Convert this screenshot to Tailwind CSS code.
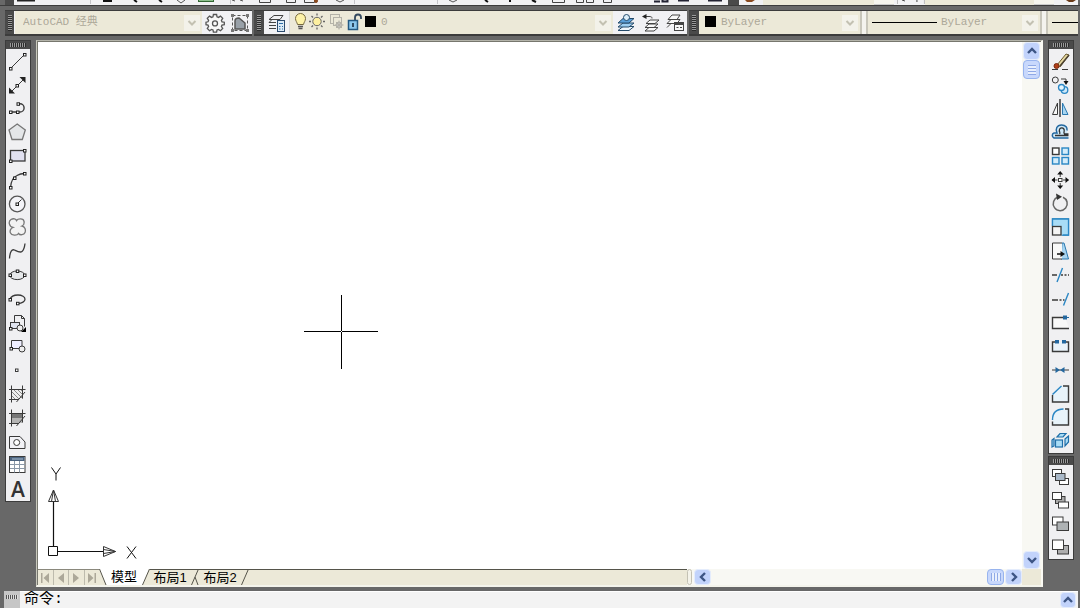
<!DOCTYPE html>
<html lang="zh-CN">
<head>
  <meta charset="UTF-8" />
  <meta name="viewport" content="width=device-width, initial-scale=1" />
  <title>AutoCAD</title>
  <script src="https://cdn.jsdelivr.net/npm/@tailwindcss/browser@4"></script>
</head>
<body class="flex h-screen flex-col overflow-hidden bg-[#686868] font-['Liberation_Sans','Noto_Sans_CJK_SC',sans-serif] text-black">

  <div class="flex h-1.5 shrink-0 border-b border-[#3c3c3c] bg-[#686868] pl-[5px] pr-0.5">
    <div class="w-[9px] bg-[#4a4a4a]"></div>
    <div class="h-[5px] w-[714px] overflow-hidden bg-[#f1f1f3]">
      <svg class="h-[5px] w-[714px]" viewBox="0 0 714 5" fill="none" stroke="#444">
        <path d="M3 .5h18" stroke="#222" stroke-width="2" />
        <path d="M76.500 0v4M340.500 0v4M423.500 0v4M216.500 0v4" stroke="#c4c4c8" />
        <path d="M89 1h9M120 0l3 2M145 0l3 2M471 0l3 2M496 0v2M518 0l4 2" stroke="#111" stroke-width="2" />
        <path d="M163 0l4 3 4-3M218 0l3 1M226 0l3 1M322 0l4 2 4-2M435 0l4 2 4-2" stroke="#555" />
        <rect x="184.500" y="-3.500" width="15" height="5" fill="#8cbf8c" stroke="#363" />
        <path d="M245.500 0v2.500h11V0M272.500 0v2.500h9V0M290.500 0v2.500h10V0M538.500 0v2.500h12V0M562.500 0v2.500h7V0M572.500 0v2.500h7V0M589.500 0v2.500h8V0" />
        <circle cx="302" cy="1" r="1.500" fill="#8a4a20" stroke="#8a4a20" />
        <path d="M640 1.500h6M648.500 0v1.500h5V0M664 .5h11M694 .5h14" stroke="#223" stroke-width="2" />
      </svg>
    </div>
    <div class="w-[11px] bg-[#4a4a4a]"></div>
    <div class="flex h-[5px] min-w-0 flex-1 bg-[#f1f1f3]">
      <svg class="h-[5px] w-6" viewBox="0 0 24 5"><path d="M6 0h10l-3 2H8z" fill="#8a4a20" /></svg>
      <div class="w-[111px] bg-[#ece9d8]"></div>
      <div class="w-5 border-b border-[#ccc] bg-[#f6f5ee]"></div>
      <svg class="h-[5px] w-8" viewBox="0 0 32 5" fill="none" stroke="#444"><path d="M3.500 0v4M30.500 0v4" stroke="#bbb" /><path d="M8 0l3 1M23 0v2" /></svg>
      <div class="w-[109px] bg-[#ece9d8]"></div>
      <div class="w-5 border-b border-[#ccc] bg-[#f6f5ee]"></div>
      <svg class="h-[5px] w-6" viewBox="0 0 24 5"><path d="M12 0h10l-3 2h-4z" fill="#6a3a18" /></svg>
    </div>
  </div>

  <!-- Workspace / layers / properties toolbars -->
  <header class="flex h-[34px] shrink-0 items-start gap-0.5 pl-[5px] pr-0.5 pt-1">
    <div class="flex h-[26px] border-b-2 border-t border-[#3c3c3c] bg-[#4a4a4a]">
      <div class="flex w-[9px] items-center justify-center"><span class="h-4 w-1 bg-[repeating-linear-gradient(#9a9a9a_0_1px,#2c2c2c_1px_2px)]"></span></div>
      <div class="flex bg-[#f1f1f4]">
        <div class="relative ml-px flex w-[187px]">
          <select aria-label="工作空间" class="w-full appearance-none bg-[#ece9d8] pl-2 font-['Liberation_Mono','Noto_Sans_CJK_SC',monospace] text-[11px] text-[#aca899] outline-none">
            <option>AutoCAD 经典</option>
          </select>
          <svg class="pointer-events-none absolute right-0.5 top-1 size-4 bg-[#f3f2ea]" viewBox="0 0 16 16" fill="none" stroke="#c3c1b2" stroke-width="2"><path d="M4.500 6l3.500 3.500L11.500 6" /></svg>
        </div>
        <button aria-label="工作空间设置" class="flex w-[25px] items-center justify-center">
          <svg class="size-5" viewBox="0 0 20 20" fill="#f8f8f8" stroke="#555" stroke-width="1.300">
            <path d="M8.400 1.500h3.200l.4 2.300 1.500.6 2-1.300 2.200 2.200-1.300 2 .6 1.500 2.300.4v2.400l-2.300.4-.6 1.500 1.300 2-2.200 2.200-2-1.300-1.500.6-.4 2.200H8.400L8 17l-1.500-.6-2 1.300-2.200-2.200 1.300-2L3 12l-2-.4V9.200L3 8.800l.6-1.500-1.300-2 2.200-2.200 2 1.300L8 3.800z" />
            <circle cx="10" cy="10.400" r="2.500" />
          </svg>
        </button>
        <button aria-label="我的工作空间" class="flex w-[25px] items-center justify-center">
          <svg class="size-5" viewBox="0 0 20 20" fill="none" stroke="#555">
            <rect x="2.500" y="2.500" width="15" height="15" stroke-dasharray="3 2" />
            <path d="M5 16V8c0-2 2-3 4-3l6 5v6z" fill="#98a0a8" stroke-width="1.500" />
            <path d="M1 1h3v3H1zM16 1h3v3h-3zM1 16h3v3H1zM16 16h3v3h-3z" fill="#777" stroke="none" />
          </svg>
        </button>
      </div>
    </div>

    <div class="flex h-[26px] border-b-2 border-t border-[#3c3c3c] bg-[#4a4a4a]">
      <div class="flex w-[10px] items-center justify-center"><span class="h-4 w-1 bg-[repeating-linear-gradient(#9a9a9a_0_1px,#2c2c2c_1px_2px)]"></span></div>
      <div class="flex bg-[#f1f1f4]">
        <button aria-label="图层特性管理器" class="flex w-[25px] items-center justify-center">
          <svg class="size-5" viewBox="0 0 20 20" fill="none" stroke="#444">
            <path d="M2 6.500L7 2.500h9l-3 4zM5 9.500H2l3-3M9 9.500H4M2 12.500h7M2 15.500h7" />
            <rect x="10.500" y="7.500" width="7" height="11" fill="#dceaf6" stroke="#2b4a6e" />
            <path d="M12 10.500h4M12 13.500h1.500M15 13.500h1M12 16h1.500M15 16h1" stroke="#2b6ca8" />
          </svg>
        </button>
        <div class="relative flex w-[324px] border-l border-[#d8d8d8]">
          <select aria-label="图层" class="w-full appearance-none bg-[#ece9d8] pl-[91px] font-['Liberation_Mono','Noto_Sans_CJK_SC',monospace] text-[11px] text-[#aca899] outline-none">
            <option>0</option>
          </select>
          <svg class="pointer-events-none absolute left-0.5 top-0 h-[22px] w-[90px]" viewBox="0 0 90 22" fill="none" stroke="#555">
            <path d="M5.500 13.500C5 11 3.500 10 3.500 7.500a5 5 0 0 1 10 0C13.500 10 12 11 11.500 13.500z" fill="#fdf3a8" stroke="#776a40" />
            <path d="M6 15.500h5M6.500 17.500h4" stroke-width="1.500" />
            <circle cx="25" cy="10.500" r="4.200" fill="#fdf0a0" stroke="#666" />
            <path d="M25 2.500v2M25 16.500v2M17 10.500h2M31 10.500h2M19.500 5l1.500 1.500M29 14.500l1.500 1.500M30.500 5L29 6.500M21 14.500L19.500 16" stroke="#666" stroke-width="1.300" />
            <g stroke="#b4b2a8"><rect x="38.500" y="3.500" width="9" height="9" /><rect x="41.500" y="6.500" width="8" height="8" fill="#ece9d8" /><circle cx="47" cy="14" r="3" fill="#ccc" /><path d="M47 9.500v9M42.500 14h9M44 11l6 6M50 11l-6 6" /></g>
            <rect x="56.500" y="9.500" width="9" height="9" fill="#8cc8ec" stroke="#245a82" stroke-width="1.500" />
            <path d="M61 12v4" stroke="#123" stroke-width="1.500" />
            <path d="M63 9V6.500a3 3 0 0 1 6 0V8" stroke="#34495e" stroke-width="1.800" />
            <path d="M73 5h11v11H73z" fill="#000" stroke="none" />
          </svg>
          <svg class="pointer-events-none absolute right-0.5 top-1 size-4 bg-[#f3f2ea]" viewBox="0 0 16 16" fill="none" stroke="#c3c1b2" stroke-width="2"><path d="M4.500 6l3.500 3.500L11.500 6" /></svg>
        </div>
        <button aria-label="将对象的图层置为当前" class="flex w-[25px] items-center justify-center">
          <svg class="size-5" viewBox="0 0 20 20" fill="#eef6fc" stroke="#244a6a">
            <path d="M2 17.500l5-4h11l-5 4z" /><path d="M2 14l5-4h11l-5 4z" fill="#9ccdf0" /><path d="M2 10l5-4.500h11L13 10z" fill="#5a9fd8" />
            <circle cx="10.500" cy="4.500" r="3" fill="#dceefa" />
          </svg>
        </button>
        <button aria-label="上一个图层" class="flex w-[25px] items-center justify-center">
          <svg class="size-5" viewBox="0 0 20 20" fill="#f8f8f8" stroke="#444">
            <path d="M4 18l4-3.500h9L13 18zM4 14.500L8 11h9l-4 3.500zM5 10.500L9 7h9l-4 3.500z" />
            <path d="M4 3.500h4c3 0 3 1 3 2" fill="none" /><path d="M5.500 1L1 3.500 5.500 6z" fill="#222" stroke="none" />
          </svg>
        </button>
        <button aria-label="图层状态管理器" class="flex w-[24px] items-center justify-center">
          <svg class="size-5" viewBox="0 0 20 20" fill="#f8f8f8" stroke="#444">
            <path d="M2 14.500l4-4h9M2 10.500l4-4h9l-3 4zM3 6.500L7 2h8l-3 4.500z" />
            <rect x="9.500" y="9.500" width="9" height="8" /><path d="M10 11h8" stroke-width="2" /><path d="M11.500 14.500h2M15 14.500h2" />
          </svg>
        </button>
      </div>
    </div>

    <div class="flex h-[26px] min-w-0 flex-1 border-b-2 border-t border-[#3c3c3c] bg-[#4a4a4a]">
      <div class="flex w-[10px] shrink-0 items-center justify-center"><span class="h-4 w-1 bg-[repeating-linear-gradient(#9a9a9a_0_1px,#2c2c2c_1px_2px)]"></span></div>
      <div class="flex min-w-0 flex-1 overflow-hidden bg-[#ece9d8] pl-0.5">
        <div class="relative flex w-[159px] shrink-0">
          <select aria-label="颜色" class="w-full appearance-none bg-[#ece9d8] pl-5 font-['Liberation_Mono','Noto_Sans_CJK_SC',monospace] text-[11px] text-[#aca899] outline-none">
            <option>ByLayer</option>
          </select>
          <span class="pointer-events-none absolute left-1 top-[5px] size-[11px] bg-black"></span>
          <svg class="pointer-events-none absolute right-0.5 top-1 size-4 bg-[#f3f2ea]" viewBox="0 0 16 16" fill="none" stroke="#c3c1b2" stroke-width="2"><path d="M4.500 6l3.500 3.500L11.500 6" /></svg>
        </div>
        <div class="w-2 shrink-0 border-x-2 border-[#c8c6ba] bg-[#f4f3ee]"></div>
        <div class="relative flex w-[172px] shrink-0">
          <select aria-label="线型" class="w-full appearance-none bg-[#ece9d8] pl-[73px] font-['Liberation_Mono','Noto_Sans_CJK_SC',monospace] text-[11px] text-[#aca899] outline-none">
            <option>ByLayer</option>
          </select>
          <span class="pointer-events-none absolute left-1 top-[11px] h-px w-[65px] bg-black"></span>
          <svg class="pointer-events-none absolute right-0.5 top-1 size-4 bg-[#f3f2ea]" viewBox="0 0 16 16" fill="none" stroke="#c3c1b2" stroke-width="2"><path d="M4.500 6l3.500 3.500L11.500 6" /></svg>
        </div>
        <div class="w-2 shrink-0 border-x-2 border-[#c8c6ba] bg-[#f4f3ee]"></div>
        <div class="relative flex min-w-0 flex-1">
          <select aria-label="线宽" class="w-full appearance-none bg-[#ece9d8] outline-none"></select>
          <span class="pointer-events-none absolute left-1 right-0 top-[11px] h-px bg-black"></span>
        </div>
      </div>
    </div>
  </header>

  <main class="flex min-h-0 flex-1 items-start gap-[5px] pl-[5px] pr-1.5">
    <!-- Draw toolbar -->
    <aside class="flex h-[462px] w-[26px] shrink-0 flex-col border border-[#3c3c3c] bg-[#f0f0f2]">
      <div class="flex h-2 shrink-0 items-center justify-center bg-[#4a4a4a]"><span class="h-1 w-4 bg-[repeating-linear-gradient(90deg,#9a9a9a_0_1px,#2c2c2c_1px_2px)]"></span></div>
      <div id="draw-tools" class="flex min-h-0 flex-1 flex-col"></div>
    </aside>

    <!-- Drawing window -->
    <section class="flex h-full min-w-0 flex-1 flex-col border-b-2 border-l border-r-2 border-t border-b-[#f4f4ec] border-l-[#c9c9bd] border-r-[#fbfbf4] border-t-[#b4b4aa]">
      <div class="flex min-h-0 flex-1 border-l border-t border-[#77776e]">
        <div class="relative min-w-0 flex-1 bg-white">
          <svg class="absolute left-[266px] top-[253px] h-[75px] w-[75px]" viewBox="0 0 75 75" stroke="#000" shape-rendering="crispEdges">
            <path d="M0 36.500h74M37.500 0v74" />
            <path d="M37 36.500h1" stroke="#fff" />
          </svg>
          <div class="absolute bottom-0 left-0 h-[110px] w-[110px]">
            <svg class="h-[110px] w-[110px]" viewBox="0 0 110 110" fill="none" stroke="#111">
              <path d="M10.500 87.500h9v9h-9z" />
              <path d="M15.500 87V43M20 92.500h46" stroke-width="1.200" />
              <path d="M15.500 31L10.500 42.500h10zM15.500 31l-2 11.500M15.500 31l2 11.500M77.500 92.500L65.500 87.500v10zM77.500 92.500l-12-2M77.500 92.500l-12 2" stroke="#333" />
              <path d="M13.500 8.500L18 15v6.500M22.500 8.500L18 15M89 87.500l9 12M98 87.500l-9 12" />
            </svg>
          </div>
        </div>
        <div class="flex w-[19px] flex-col items-center bg-[#f8f8f3]">
          <button aria-label="向上滚动" class="flex h-[18px] w-[17px] items-center justify-center rounded-sm border border-[#e4ecfc] bg-[#c2d3fb]"><svg class="h-2 w-[10px]" viewBox="0 0 10 8" fill="none" stroke="#3d5584" stroke-width="2.400"><path d="M1 6l4-4 4 4" /></svg></button>
          <button aria-label="垂直滑块" class="flex h-[19px] w-[17px] items-center justify-center rounded-sm border border-[#98b4ee] bg-[#c8d8fc]"><span class="h-2.5 w-2 bg-[repeating-linear-gradient(#8fa9e6_0_1px,#e8effd_1px_3px)]"></span></button>
          <button aria-label="向下滚动" class="mt-auto flex h-[18px] w-[17px] items-center justify-center rounded-sm border border-[#e4ecfc] bg-[#c2d3fb]"><svg class="h-2 w-[10px]" viewBox="0 0 10 8" fill="none" stroke="#3d5584" stroke-width="2.400"><path d="M1 2l4 4 4-4" /></svg></button>
        </div>
      </div>

      <!-- Layout tabs -->
      <div class="flex h-4 shrink-0 border-l border-l-[#77776e] bg-[#ece9d8]">
        <div class="flex w-[61px] border-t border-[#8a887c]">
          <button aria-label="第一个" class="flex flex-1 items-center justify-center border-r border-[#bdbbad]"><svg class="h-2.5 w-2.5" viewBox="0 0 10 10" fill="#aca899"><path d="M1 0h1.500v10H1zM9 0v10L3.500 5z" /></svg></button>
          <button aria-label="上一个" class="flex flex-1 items-center justify-center border-r border-[#bdbbad]"><svg class="h-2.5 w-2.5" viewBox="0 0 10 10" fill="#aca899"><path d="M8 0v10L2 5z" /></svg></button>
          <button aria-label="下一个" class="flex flex-1 items-center justify-center border-r border-[#bdbbad]"><svg class="h-2.5 w-2.5" viewBox="0 0 10 10" fill="#aca899"><path d="M2 0v10l6-5z" /></svg></button>
          <button aria-label="最后一个" class="flex flex-1 items-center justify-center"><svg class="h-2.5 w-2.5" viewBox="0 0 10 10" fill="#aca899"><path d="M7.500 0H9v10H7.500zM1 0v10l5.500-5z" /></svg></button>
        </div>
        <svg class="h-4 w-2 shrink-0" viewBox="0 0 8 16"><path d="M0 0h8v16H7z" fill="#fff" /><path d="M.5 0L7 16" fill="none" stroke="#55544a" /></svg>
        <button class="w-[34px] shrink-0 bg-white text-center text-[13px] leading-4 whitespace-nowrap">模型</button>
        <svg class="h-4 w-[9px] shrink-0" viewBox="0 0 9 16"><path d="M0 0h8L2 16H0z" fill="#fff" /><path d="M8.500 0L1.500 16" fill="none" stroke="#55544a" /></svg>
        <button class="w-10 shrink-0 border-t border-[#55544a] text-center text-[13px] leading-[14px] whitespace-nowrap">布局1</button>
        <svg class="h-4 w-[10px] shrink-0" viewBox="0 0 10 16" fill="none" stroke="#55544a"><path d="M0 .5h10M8.500 0L1.500 16M5 8l3 8" /></svg>
        <button class="w-10 shrink-0 border-t border-[#55544a] text-center text-[13px] leading-[14px] whitespace-nowrap">布局2</button>
        <svg class="h-4 w-[10px] shrink-0" viewBox="0 0 10 16" fill="none" stroke="#55544a"><path d="M0 .5h10M8.500 0L1.500 16" /></svg>
        <div class="min-w-0 flex-1 border-t border-[#55544a]"></div>
        <div class="flex w-[335px] shrink-0 bg-[#f8f8f3]">
          <div class="mr-0.5 w-[5px] rounded-sm border border-[#c4c2b4] bg-[#f4f3ea]"></div>
          <button aria-label="向左滚动" class="flex w-[17px] items-center justify-center rounded-sm border border-[#e4ecfc] bg-[#c2d3fb]"><svg class="h-[10px] w-2" viewBox="0 0 8 10" fill="none" stroke="#3d5584" stroke-width="2.400"><path d="M6 1L2 5l4 4" /></svg></button>
          <button aria-label="水平滑块" class="ml-auto flex w-[17px] items-center justify-center rounded-sm border border-[#98b4ee] bg-[#c8d8fc]"><span class="h-2 w-2.5 bg-[repeating-linear-gradient(90deg,#8fa9e6_0_1px,#e8effd_1px_3px)]"></span></button>
          <button aria-label="向右滚动" class="ml-px flex w-[17px] items-center justify-center rounded-sm border border-[#e4ecfc] bg-[#c2d3fb]"><svg class="h-[10px] w-2" viewBox="0 0 8 10" fill="none" stroke="#3d5584" stroke-width="2.400"><path d="M2 1l4 4-4 4" /></svg></button>
        </div>
        <div class="w-[19px] shrink-0"></div>
      </div>
    </section>

    <div class="flex w-[26px] shrink-0 flex-col gap-0.5">
      <!-- Modify toolbar -->
      <aside class="flex h-[414px] flex-col border border-[#3c3c3c] bg-[#f0f0f2]">
        <div class="flex h-2 shrink-0 items-center justify-center bg-[#4a4a4a]"><span class="h-1 w-4 bg-[repeating-linear-gradient(90deg,#9a9a9a_0_1px,#2c2c2c_1px_2px)]"></span></div>
        <div id="modify-tools" class="flex min-h-0 flex-1 flex-col"></div>
      </aside>
      <!-- Draw order toolbar -->
      <aside class="flex h-[104px] flex-col border border-[#3c3c3c] bg-[#f0f0f2]">
        <div class="flex h-2 shrink-0 items-center justify-center bg-[#4a4a4a]"><span class="h-1 w-4 bg-[repeating-linear-gradient(90deg,#9a9a9a_0_1px,#2c2c2c_1px_2px)]"></span></div>
        <div id="order-tools" class="flex min-h-0 flex-1 flex-col"></div>
      </aside>
    </div>
  </main>

  <!-- Command line -->
  <footer class="mt-1 flex h-[17px] shrink-0 overflow-hidden pl-1 pr-0.5">
    <div class="w-4 shrink-0 bg-[#c6c6c6] pl-0.5 pt-1"><span class="block h-1 w-3 bg-[repeating-linear-gradient(90deg,#555_0_1px,#ddd_1px_2px)]"></span></div>
    <div class="flex min-w-0 flex-1 border-t border-white bg-[#f3f3f3] pl-1">
      <label for="command" class="shrink-0 font-['Liberation_Mono','Noto_Sans_CJK_SC',monospace] text-[15px] leading-4">命令:</label>
      <input id="command" type="text" class="min-w-0 flex-1 bg-transparent px-1 text-sm outline-none" />
      <button aria-label="向上滚动命令历史" class="mr-0.5 flex w-4 items-center justify-center rounded-sm border border-[#e4ecfc] bg-[#c2d3fb]"><svg class="h-2 w-[10px]" viewBox="0 0 10 8" fill="none" stroke="#3d5584" stroke-width="2.400"><path d="M1 6l4-4 4 4" /></svg></button>
    </div>
  </footer>

  <script>
    // Small square grip used on most of the drawing icons.
    function grip(x, y) {
      return `<rect x="${x - 1}" y="${y - 1}" width="2.500" height="2.500" fill="#fff" stroke="#222"/>`;
    }

    const drawTools = [
      ['直线', `<path d="M2.500 17.500L16.500 3.500"/>${grip(2.5, 17.5)}${grip(16.5, 3.5)}`],
      ['构造线', `<path d="M3 17L16 4"/><path d="M1 18.500v-6l6 6zM17.500 2v6l-6-6z" fill="#222" stroke="none"/>${grip(9, 10.5)}`],
      ['多段线', `<path d="M2 14h10a4.100 4.100 0 0 0 0-8.200h-2" stroke-width="1.400"/>${grip(2.5, 14)}${grip(9.5, 14)}${grip(10, 5.8)}`],
      ['正多边形', `<path d="M9.200 2L17.300 8l-3 9.500H4L1 8z" fill="#e4e6e8" stroke="#777" stroke-width="1.300"/>`],
      ['矩形', `<rect x="2.500" y="4.500" width="14.500" height="10.500" fill="#e0e0f0" stroke-width="1.300"/>${grip(2.5, 15)}${grip(16.5, 4.5)}`],
      ['圆弧', `<path d="M2.500 17.500C3 12 5 7 9 5.500c2.500-1.500 5-2 7.500-2" stroke-width="1.300"/>${grip(2.5, 17.5)}${grip(6.5, 8)}${grip(16.5, 3.5)}`],
      ['圆', `<circle cx="9.200" cy="10" r="7.800" fill="#f4f4f8" stroke="#555" stroke-width="1.300"/><path d="M9.500 9.500l4-4"/>${grip(9, 10)}`],
      ['修订云线', `<path d="M5 10.500C1 9.500 0 4.500 3 2.500c2.500-1.500 5-.5 5.500 1 1.500-2 7-2.500 7.500 1 .5 2.500-1 4-2 4.500 3 .5 4 4 3 6.500-1 2.500-5 3-6.500 1-1.500 2.500-7 2-8-.5-1-2 0-4.500 2.500-5.500z" fill="#f2f2f2" stroke="#777" stroke-width="1.300"/>`],
      ['样条曲线', `<path d="M1.500 17.500C2 10 4 8 6.500 9c3 1.500 5.500 3 7.500 1.500 2-1.500 2.500-4 3-8" stroke-width="1.300"/>`],
      ['椭圆', `<ellipse cx="9.200" cy="10.300" rx="7.500" ry="4.300" fill="#e6e8ea"/>${grip(2, 10)}${grip(16.5, 10)}${grip(9.3, 6)}`],
      ['椭圆弧', `<path d="M2 10.500C3 7 7 6 10 6c4 0 7 2 7 4.200S14 14.300 10 14.500" stroke-width="1.300"/>${grip(2, 10.5)}${grip(9.5, 14.3)}`],
      ['插入块', `<path d="M6.500 9V2.500h7l3 3v8M13.500 2.500v3h3"/><rect x="2.500" y="9.500" width="9" height="6" fill="#dfe3ee"/><circle cx="12" cy="15" r="3" fill="#eee"/>${grip(2.5, 15.5)}<path d="M18 14v5h-5z" fill="#000" stroke="none"/>`],
      ['创建块', `<path d="M3.500 12.500v-8H14v8z" fill="#eef"/><circle cx="14" cy="13" r="3" fill="#eee"/>${grip(3, 12.5)}`],
      ['点', `<rect x="7.500" y="9" width="2.500" height="2.500" fill="#fff"/>`],
      ['图案填充', `<rect x="3.500" y="5.500" width="11" height="9.500" fill="#eee" stroke="none"/><path d="M4 8l7 7M4 12l3 3M5 5l9.500 9.500M9 5l5.500 5.500M12 5l3 3" stroke="#888"/><path d="M3.500 1.500v17M14.500 1.500v13M1 5.500h16.500M1 15.500h10M17 8L8.500 18"/>`],
      ['渐变色', `<rect x="4" y="6" width="10.500" height="4" fill="#777" stroke="none"/><rect x="4" y="10" width="10.500" height="5" fill="#b4b4b4" stroke="none"/><path d="M3.500 1.500v17M14.500 1.500v13M1 5.500h16.500M1 15.500h10M17 8L8.500 18"/>`],
      ['面域', `<path d="M1.500 4.500h10.500l5 5.500v6.500H1.500z" fill="#f2f2f6"/><circle cx="8.700" cy="10.500" r="3" fill="#fff"/>`],
      ['表格', `<rect x="1.500" y="1.500" width="15.500" height="16" fill="#fff"/><path d="M2 2h14.500v4H2z" fill="#4a627e" stroke="none"/><path d="M2 9.500h15M2 13.500h15M6.500 6v11.500M11.500 6v11.500" stroke="#8a98a8"/><path d="M4 4h11" stroke="#a8bccf"/>`],
      ['多行文字', null]
    ];

    const modifyTools = [
      ['删除', `<path d="M1 18.500h6M11 18.500h6"/><path d="M6 14L15 3l3 1-9 12z" fill="#e6d8a0" stroke="#6b5a30"/><path d="M9 15L18 4" stroke="#4a4030" stroke-width="1.500"/><circle cx="5.500" cy="15" r="2.500" fill="#b04018" stroke="#7a2a10"/>`],
      ['复制', `<circle cx="4.300" cy="5" r="3"/><path d="M10 4h5v3"/><path d="M12.500 6h5L15 10z" fill="#111" stroke="none"/><g stroke="#2a86c4" stroke-width="1.300"><circle cx="13.500" cy="15" r="3.300" fill="#cfe8f8"/><circle cx="10.500" cy="12.500" r="3" fill="#e4f4fc"/></g>`],
      ['镜像', `<path d="M1.500 16.500L6.500 5v11.500z" fill="#f8f8f8"/><path d="M11.500 16.500V5l5.500 11.500z" fill="#a8d4f0" stroke="#2a78b0"/><path d="M9 1v18" stroke-width="1.500"/>`],
      ['偏移', `<path d="M17.500 16H3c-2.500-1-2-4.500 0-5h3c-2-4 0-8 4.500-8S16.500 6 16 8.500" fill="#cfe8f8" stroke="#2468a0" stroke-width="1.500"/><path d="M17.500 13.500H4M8.500 12c1-1 0-2-.2-3 0-2 1-3.200 2.500-3.200s2.700 1.500 2.400 3.200c-.4 1-.5 2 .3 3h4" stroke="#333" stroke-width="1.300"/>`],
      ['阵列', `<g stroke-width="1.400"><rect x="1.500" y="2" width="6.500" height="6.500" fill="#fff"/><g fill="#d4ecfa" stroke="#2a86c4"><rect x="11" y="2" width="6.500" height="6.500"/><rect x="1.500" y="11.500" width="6.500" height="6.500"/><rect x="11" y="11.500" width="6.500" height="6.500"/></g></g>`],
      ['移动', `<rect x="7.500" y="8.500" width="3.500" height="3" fill="#fff"/><path d="M9.200 2v5M9.200 13v5M1 10h5.500M12 10h5.500"/><path d="M9.200 1l3 3.500h-6zM9.200 19l3-3.500h-6zM.5 10L4 7v6zM18 10l-3.500-3v6z" fill="#111" stroke="none"/>`],
      ['旋转', `<path d="M12 4.200A7 7 0 1 1 7 4" stroke="#666" stroke-width="1.500"/><path d="M5 .5l6 3.300L6 7z" fill="#333" stroke="none"/>`],
      ['缩放', `<path d="M1.500 9V2h16v16h-7" fill="#a8dcf6" stroke="#2a86c4" stroke-width="1.300"/><path d="M1.500 2v8h9v8h7V2z" fill="#a8dcf6" stroke="none"/><path d="M1.500 9V2h16v16h-6" stroke="#2a86c4" stroke-width="1.300"/><rect x="1.500" y="9.500" width="8.500" height="8.500" fill="#f4f4f4" stroke-width="1.300"/>`],
      ['拉伸', `<path d="M11 2h2l4.500 16H10z" fill="#a8d4f0" stroke="#2a78b0"/><path d="M11 2H1.500v16H11" fill="#f8f8f8"/><path d="M6 13h5" stroke="#111" stroke-width="1.500"/><path d="M9.500 10l4.500 3-4.500 3z" fill="#111" stroke="none"/>`],
      ['修剪', `<path d="M1 10h5M10 10h2M13.500 10h2M17 10h1" stroke-width="1.400"/><path d="M6 17l5.500-14" stroke="#2a86c4" stroke-width="1.400"/>`],
      ['延伸', `<path d="M1 11h6M8.500 11h2M12 11h1.500" stroke-width="1.400"/><path d="M12.500 16.500L17.500 4" stroke="#2a86c4" stroke-width="1.400"/>`],
      ['打断于点', `<path d="M14 5.500H1.500v11H18" fill="#f8f8f8" stroke-width="1.400"/><path d="M12 3.500h4v4h-4z" fill="#2468a0" stroke="none"/><path d="M16 5.500h2" stroke="#2468a0"/>`],
      ['打断', `<path d="M4 6H1.500v9.500h16V6H15" fill="#eaf3fa" stroke-width="1.400"/><path d="M4 4h4v3.500H4zM11 4h4v3.500h-4z" fill="#2468a0" stroke="none"/>`],
      ['合并', `<path d="M1 10h17"/><path d="M4.500 7v6L9 10zM13.500 7v6L9 10z" fill="#2468a0" stroke="none"/>`],
      ['倒角', `<path d="M1.500 10v8h16V2H11z" fill="#e8f3fa" stroke="none"/><path d="M1.500 11v7h16V2H12" stroke-width="1.400"/><path d="M1.500 10.500L10.500 2" stroke="#2a86c4" stroke-width="1.400"/>`],
      ['圆角', `<path d="M1.500 13c0-7 4-11 11-11h5v16h-16z" fill="#e8f3fa" stroke="none"/><path d="M1.500 14.500V18h16V2H14" stroke-width="1.400"/><path d="M1.500 13c0-7 4-11 11-11" stroke="#2a86c4" stroke-width="1.400"/>`],
      ['分解', `<g stroke="#1f6ea8" stroke-width="1.200" fill="#a8dcf6"><rect x="4.500" y="9" width="7" height="7"/><path d="M6 6l3-3.500h6L12 6zM14 8l3.500-3v6L14 15zM3 7.500L1 9v7l2-1z"/></g>`]
    ];

    const orderTools = [
      ['前置', `<rect x="1.500" y="2.500" width="9" height="7" fill="#fff"/><rect x="8.500" y="11.500" width="9" height="6" fill="#fff"/><rect x="4.500" y="6.500" width="9.500" height="7" fill="#a9b8c8"/>`],
      ['后置', `<rect x="4.500" y="6.500" width="9.500" height="7" fill="#a9a9a9"/><rect x="1.500" y="2.500" width="9" height="7" fill="#fff"/><rect x="7.500" y="12" width="10" height="6" fill="#fff"/>`],
      ['置于对象之上', `<rect x="1.500" y="3" width="10.500" height="8" fill="#fff"/><rect x="6" y="8" width="11.500" height="8.500" fill="#aeb2b4"/>`],
      ['置于对象之下', `<rect x="6.500" y="8.500" width="11" height="8.500" fill="#aeaeae"/><rect x="1.500" y="3" width="11" height="9.500" fill="#fff"/>`]
    ];

    function renderTools(id, tools) {
      const container = document.getElementById(id);
      tools.forEach(([name, icon]) => {
        const button = document.createElement('button');
        button.className = 'flex min-h-0 flex-1 items-center justify-center';
        button.title = name;
        button.setAttribute('aria-label', name);
        button.innerHTML = icon
          ? `<svg class="size-5 shrink-0" viewBox="0 0 20 20" fill="none" stroke="#3a3a3a">${icon}</svg>`
          : `<span class="font-['Open_Sans','Liberation_Sans',sans-serif] text-[21px] leading-5 font-semibold text-[#333]">A</span>`;
        container.appendChild(button);
      });
    }

    renderTools('draw-tools', drawTools);
    renderTools('modify-tools', modifyTools);
    renderTools('order-tools', orderTools);
  </script>
</body>
</html>
